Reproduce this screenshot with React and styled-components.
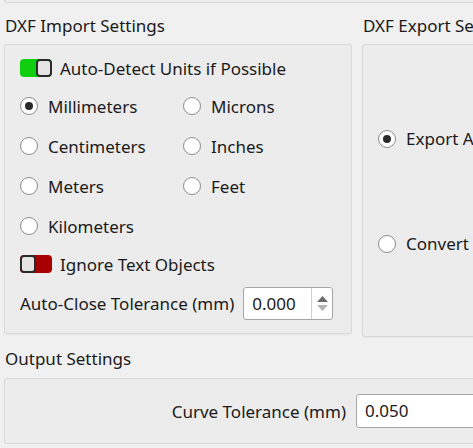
import React from 'react'
import styled, { createGlobalStyle } from 'styled-components'

const GlobalStyle = createGlobalStyle`
  html, body {
    margin: 0;
    padding: 0;
    background: #f0f0f0;
    overflow: hidden;
  }
  body {
    font-family: "Noto Sans", "Open Sans", sans-serif;
    font-size: 17px;
    color: #1a1a1a;
  }
`

const Page = styled.div`
  width: 760px;
  padding: 0 0 0 4px;
`

const TopEdge = styled.div`
  height: 2px;
  width: 700px;
  background: #ececec;
  border: 1px solid #d8d8d8;
  border-top: none;
  border-radius: 0 0 3px 3px;
`

const Columns = styled.div`
  display: flex;
  align-items: flex-start;
  gap: 10px;
`

const Column = styled.div`
  display: flex;
  flex-direction: column;
  width: ${p => p.$width}px;
`

const Title = styled.div`
  padding: ${p => p.$top || 12}px 0 0 1px;
  height: ${p => p.$height || 29}px;
  line-height: 22px;
  white-space: nowrap;
`

const GroupBox = styled.div`
  background: #ececec;
  border: 1px solid #d9d9d9;
  border-radius: 3px;
  box-shadow: 0 1px 1px rgba(0, 0, 0, 0.04);
`

const ImportBox = styled(GroupBox)`
  display: flex;
  flex-direction: column;
  padding: 13px 0 11px 15px;
  height: 264px;
  box-sizing: content-box;
`

const ExportBox = styled(GroupBox)`
  display: flex;
  flex-direction: column;
  gap: 82px;
  height: 293px;
  padding: 82px 0 0 15px;
  box-sizing: border-box;
`

const OptionRow = styled.div`
  display: flex;
  align-items: center;
  height: ${p => p.$height || 20}px;
  margin-top: ${p => p.$top || 0}px;
  gap: ${p => p.$gap || 8}px;
  white-space: nowrap;
`

const RadioGrid = styled.div`
  display: grid;
  grid-template-columns: 163px 1fr;
  grid-auto-rows: 40px;
  margin-top: 8px;
`

const RadioItem = styled.label`
  display: flex;
  align-items: center;
  gap: 10px;
  white-space: nowrap;
`

const RadioCircle = styled.span`
  width: 16px;
  height: 16px;
  border-radius: 50%;
  background: #fff;
  border: 1px solid #8c8c8c;
  display: flex;
  align-items: center;
  justify-content: center;
  flex-shrink: 0;

  &::after {
    content: '';
    width: 8px;
    height: 8px;
    border-radius: 50%;
    background: #2b2b2b;
    display: ${p => (p.$checked ? 'block' : 'none')};
  }
`

const Toggle = styled.span`
  display: flex;
  flex-direction: ${p => (p.$on ? 'row' : 'row-reverse')};
  width: 32px;
  height: 18px;
  border-radius: 4px;
  overflow: hidden;
  background: ${p => (p.$on ? '#0fcf0f' : '#a80000')};
  flex-shrink: 0;
`

const ToggleFill = styled.span`
  flex: 1;
`

const Knob = styled.span`
  width: 16px;
  height: 18px;
  box-sizing: border-box;
  border: 2px solid #2a2a2a;
  border-radius: 4px;
  background: #e6e3e3;
`

const SpinBox = styled.div`
  display: flex;
  width: 90px;
  height: 33px;
  box-sizing: border-box;
  background: #fff;
  border: 1px solid #a6a6a6;
  border-radius: 3px;
`

const SpinText = styled.span`
  flex: 1;
  padding-left: 8px;
  line-height: 31px;
`

const SpinArrows = styled.span`
  width: 20px;
  border-left: 1px solid #d2d2d2;
  display: flex;
  flex-direction: column;
  align-items: center;
  justify-content: center;
  gap: 3px;
`

const OutputBox = styled(GroupBox)`
  display: flex;
  align-items: center;
  height: 66px;
  width: 700px;
  box-sizing: border-box;
  padding-left: 1px;
`

const FieldLabel = styled.span`
  width: 340px;
  text-align: right;
  padding-right: 10px;
  white-space: nowrap;
`

const TextField = styled.div`
  width: 300px;
  height: 34px;
  box-sizing: border-box;
  background: #fff;
  border: 1px solid #a6a6a6;
  border-radius: 3px;
  padding-left: 8px;
  line-height: 32px;
`

const Radio = ({ checked, children }) => (
  <RadioItem>
    <RadioCircle $checked={checked} />
    {children}
  </RadioItem>
)

const Switch = ({ on, children, top }) => (
  <OptionRow $top={top}>
    <Toggle $on={on}>
      <ToggleFill />
      <Knob />
    </Toggle>
    {children}
  </OptionRow>
)

const Arrow = ({ up, color }) => (
  <svg width="11" height="6" viewBox="0 0 11 6">
    <path d={up ? 'M0 6 L5.5 0 L11 6 Z' : 'M0 0 L5.5 6 L11 0 Z'} fill={color} />
  </svg>
)

const units = [
  ['Millimeters', 'Microns'],
  ['Centimeters', 'Inches'],
  ['Meters', 'Feet'],
  ['Kilometers', null]
]

export default function App() {
  return (
    <Page>
      <GlobalStyle />
      <TopEdge />
      <Columns>
        <Column $width={348}>
          <Title>DXF Import Settings</Title>
          <ImportBox>
            <Switch on>Auto-Detect Units if Possible</Switch>
            <RadioGrid>
              {units.flat().map((u, i) =>
                u ? (
                  <Radio key={u} checked={i === 0}>
                    {u}
                  </Radio>
                ) : (
                  <span key={i} />
                )
              )}
            </RadioGrid>
            <Switch on={false} top={8}>Ignore Text Objects</Switch>
            <OptionRow $top={13} $height={33} $gap={9}>
              <span>Auto-Close Tolerance (mm)</span>
              <SpinBox>
                <SpinText>0.000</SpinText>
                <SpinArrows>
                  <Arrow up color="#6a6a6a" />
                  <Arrow color="#b4b4b4" />
                </SpinArrows>
              </SpinBox>
            </OptionRow>
          </ImportBox>
        </Column>
        <Column $width={300}>
          <Title>DXF Export Settings</Title>
          <ExportBox>
            <Radio checked>Export All Layers</Radio>
            <Radio>Convert Text to Paths</Radio>
          </ExportBox>
        </Column>
      </Columns>
      <Title $top={11} $height={30}>Output Settings</Title>
      <OutputBox>
        <FieldLabel>Curve Tolerance (mm)</FieldLabel>
        <TextField>0.050</TextField>
      </OutputBox>
    </Page>
  )
}
